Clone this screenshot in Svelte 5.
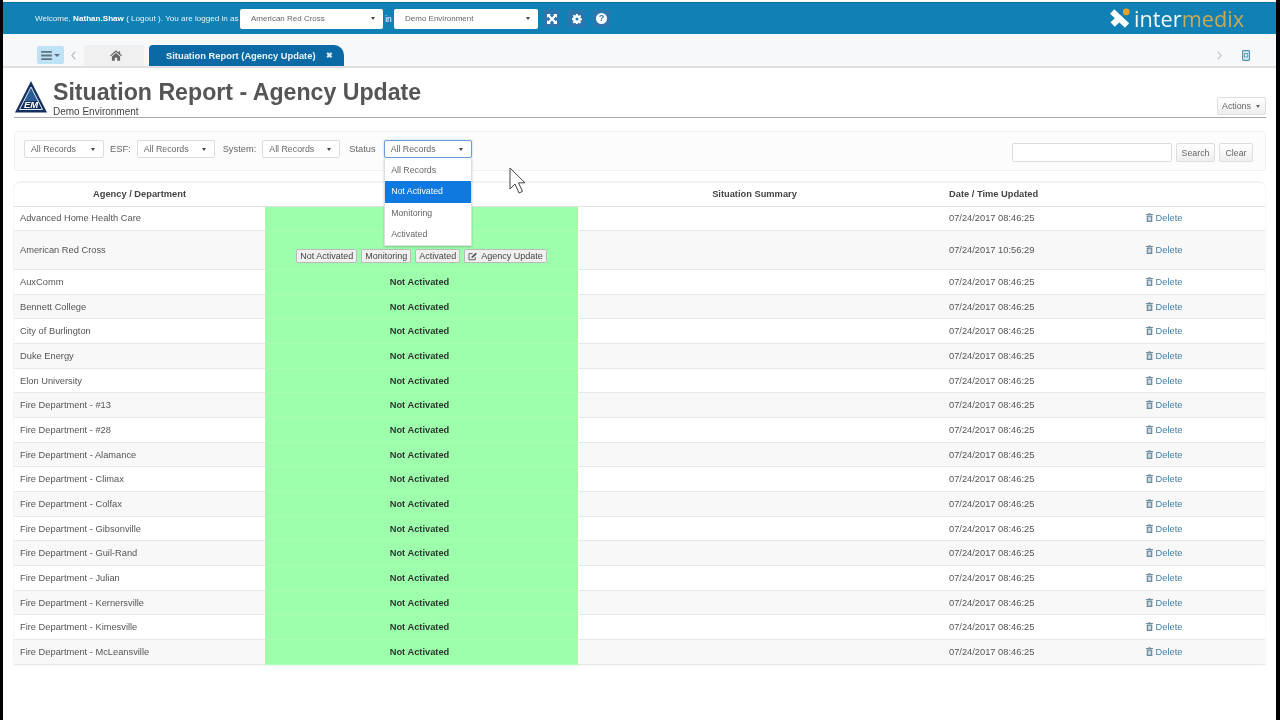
<script>
	const rows = [
		'Advanced Home Health Care',
		'American Red Cross',
		'AuxComm',
		'Bennett College',
		'City of Burlington',
		'Duke Energy',
		'Elon University',
		'Fire Department - #13',
		'Fire Department - #28',
		'Fire Department - Alamance',
		'Fire Department - Climax',
		'Fire Department - Colfax',
		'Fire Department - Gibsonville',
		'Fire Department - Guil-Rand',
		'Fire Department - Julian',
		'Fire Department - Kernersville',
		'Fire Department - Kimesville',
		'Fire Department - McLeansville'
	];
	const options = ['All Records', 'Not Activated', 'Monitoring', 'Activated'];
</script>

<div class="page">
	<header class="topbar">
		<div class="welcome">Welcome, <b>Nathan.Shaw</b> ( Logout ). You are logged in as</div>
		<div class="select top-select org">American Red Cross<i class="caret"></i></div>
		<span class="in">in</span>
		<div class="select top-select env">Demo Environment<i class="caret"></i></div>
		<button class="icon-btn first" aria-label="Fullscreen">
			<svg viewBox="0 0 12 12" width="10" height="10"><path fill="#fff" d="M0 0h4.5L3.4 1.6 6 4.1l2.6-2.5L7.5 0H12v4.5l-1.6-1.1L7.9 6l2.5 2.6 1.6-1.1V12H7.5l1.1-1.6L6 7.9l-2.6 2.5L4.5 12H0V7.5l1.6 1.1L4.1 6 1.6 3.4 0 4.5z" /></svg>
		</button>
		<button class="icon-btn" aria-label="Settings">
			<svg viewBox="0 0 12 12" width="10" height="10"><path fill="#fff" fill-rule="evenodd" d="M4.9 0h2.2l.3 1.6 1.1.5L9.9 1.2l1.1 1.5-1 1.2.3 1.2 1.7.3v2.1l-1.7.3-.4 1.1 1 1.3-1.4 1.3-1.3-.9-1.1.4-.3 1.6H4.9l-.3-1.6-1.1-.4-1.3.9L.8 9.9l.9-1.3-.4-1.1L0 7.1V5l1.4-.4.4-1.1-.9-1.3L2.2 1l1.3.9 1.1-.4zM6 4.2a1.8 1.8 0 1 0 0 3.6 1.8 1.8 0 0 0 0-3.6z" /></svg>
		</button>
		<button class="icon-btn help" aria-label="Help"><span>?</span></button>
		<div class="brand">
			<svg viewBox="0 0 24 22" width="21" height="20">
				<path fill="none" stroke="#fff" stroke-width="7" d="M2.5 3.5 19.5 19.5M3 18.5l8-7.5" />
				<circle cx="18.6" cy="4" r="3.8" fill="#e9a02d" />
			</svg>
			<span class="brand-text">inter<em>medix</em></span>
		</div>
	</header>

	<nav class="tabbar">
		<button class="menu-btn" aria-label="Menu">
			<svg viewBox="0 0 12 10" width="11" height="9"><path fill="#5f7480" d="M0 0h12v2H0zM0 4h12v2H0zM0 8h12v2H0z" /></svg>
			<i class="mini-caret"></i>
		</button>
		<svg class="chev left" viewBox="0 0 6 10" width="5" height="9"><path fill="none" stroke="#bbb" stroke-width="1.4" d="M5 .5 1 5l4 4.5" /></svg>
		<div class="home-tab">
			<svg viewBox="0 0 14 12" width="12" height="11"><path fill="#666" d="M7 0 0 6l.8 1L7 1.8 13.2 7l.8-1-2.2-1.9V1h-1.7v1.7zM2.2 7.2V12h3.4V8.6h2.8V12h3.4V7.2L7 3.2z" /></svg>
		</div>
		<div class="active-tab">Situation Report (Agency Update)<span class="close">✖</span></div>
		<svg class="chev right" viewBox="0 0 6 10" width="5" height="9"><path fill="none" stroke="#c8c8c8" stroke-width="1.4" d="M1 .5 5 5 1 9.5" /></svg>
		<svg class="doc" viewBox="0 0 8 11" width="8" height="11"><rect x=".6" y=".6" width="6.8" height="9.8" rx=".8" fill="#d9edf7" stroke="#4a8fae" stroke-width="1.1" /><rect x="2.3" y="3.6" width="3.4" height="3.4" fill="none" stroke="#4a8fae" stroke-width=".8" /></svg>
	</nav>

	<section class="content">
		<div class="title-row">
			<svg class="logo" viewBox="0 0 32 32" width="32" height="32">
				<path fill="#14305f" d="M16 0 32 31.5H0z" />
				<path fill="#2a5c96" d="M16 7 24 20H8z" />
				<path fill="none" stroke="#dfe8f2" stroke-width="1" d="M16 6 27.5 28.5H4.5z" />
				<text x="16" y="27" text-anchor="middle" class="logo-text">EM</text>
			</svg>
			<div class="title-text">
				<h1>Situation Report - Agency Update</h1>
				<div class="subtitle">Demo Environment</div>
			</div>
			<button class="actions">Actions<i class="caret small"></i></button>
		</div>

		<div class="filters">
			<div class="select f1">All Records<i class="caret"></i></div>
			<label class="l-esf">ESF:</label>
			<div class="select f2">All Records<i class="caret"></i></div>
			<label class="l-sys">System:</label>
			<div class="select f2">All Records<i class="caret"></i></div>
			<label class="l-status">Status</label>
			<div class="select status-select">
				All Records<i class="caret"></i>
				<ul class="dropdown">
					{#each options as opt, i}
						<li class:selected={i === 1}>{opt}</li>
					{/each}
				</ul>
			</div>
			<input class="search" type="text" />
			<button class="btn search-btn">Search</button>
			<button class="btn clear-btn">Clear</button>
		</div>

		<table>
			<colgroup>
				<col style="width:251px" />
				<col style="width:313px" />
				<col style="width:353px" />
				<col style="width:197px" />
				<col />
			</colgroup>
			<thead>
				<tr>
					<th>Agency / Department</th>
					<th></th>
					<th>Situation Summary</th>
					<th class="date-h">Date / Time Updated</th>
					<th></th>
				</tr>
			</thead>
			<tbody>
				{#each rows as name, i}
					<tr class:tall={i === 1}>
						<td class="name">{name}</td>
						<td class="status">
							<div class="status-label">Not Activated</div>
							{#if i === 1}
								<div class="status-btns">
									<button>Not Activated</button>
									<button>Monitoring</button>
									<button>Activated</button>
									<button>
										<svg viewBox="0 0 11 10" width="10" height="9"><path fill="none" stroke="#555" stroke-width="1" d="M8 5.6v3H1V1.8h4" /><path fill="#555" d="M4 5 8.4.8l1.4 1.4L5.4 6.4 3.8 6.6z" /></svg>
										Agency Update
									</button>
								</div>
							{/if}
						</td>
						<td></td>
						<td class="date">{i === 1 ? '07/24/2017 10:56:29' : '07/24/2017 08:46:25'}</td>
						<td class="del">
							<svg viewBox="0 0 8 10" width="7" height="9"><path fill="#6c8ba0" fill-rule="evenodd" d="M3 0h2l.4 1H8v1H0V1h2.6zM.8 2.6h6.4V10H.8zM2.2 4v4.6h.8V4zm1.4 0v4.6h.8V4zm1.4 0v4.6h.8V4z" /></svg>
							<span>Delete</span>
						</td>
					</tr>
				{/each}
			</tbody>
		</table>
	</section>

	<svg class="cursor" viewBox="0 0 18 27" width="18" height="27">
		<path fill="#fff" stroke="#444" stroke-width="1" d="M1 1v21l5-5 4 9 3.5-1.6-4-8.6H16z" />
	</svg>
</div>

<style>
	:global(body) {
		margin: 0;
		background: #000;
	}

	.page {
		position: relative;
		height: 720px;
		margin: 0 4px 0 3px;
		background: #fff;
		font-family: 'Liberation Sans', Arial, sans-serif;
		font-size: 9.3px;
		color: #444;
		overflow: hidden;
		filter: blur(0.45px);
	}

	.topbar {
		display: flex;
		align-items: center;
		height: 32px;
		margin-top: 2px;
		padding-left: 32px;
		background: #1180b4;
		color: #fff;
		border-top: 1px solid #0f6f9e;
		box-sizing: border-box;
	}

	.welcome {
		width: 205px;
		font-size: 8.1px;
		color: #e4f3fa;
		white-space: nowrap;
	}

	.welcome b {
		color: #fff;
	}

	.select {
		position: relative;
		display: flex;
		align-items: center;
		box-sizing: border-box;
		height: 18px;
		padding-left: 6px;
		background: #fff;
		border: 1px solid #ddd;
		border-radius: 2px;
		font-size: 8.8px;
		color: #666;
	}

	.caret {
		position: absolute;
		right: 8px;
		top: 50%;
		margin-top: -1.5px;
		border-left: 2.5px solid transparent;
		border-right: 2.5px solid transparent;
		border-top: 3.5px solid #444;
	}

	.top-select {
		height: 20px;
		border: none;
		padding-left: 11px;
		font-size: 8px;
	}

	.org {
		width: 143px;
	}

	.env {
		width: 144px;
	}

	.in {
		width: 11px;
		text-align: center;
		font-size: 8.5px;
	}

	.icon-btn {
		display: flex;
		align-items: center;
		justify-content: center;
		width: 17px;
		height: 17px;
		margin-left: 8px;
		padding: 0;
		border: none;
		background: #2c76ad;
	}

	.icon-btn.first {
		margin-left: 5px;
	}

	.help span {
		display: block;
		width: 11px;
		height: 11px;
		border-radius: 50%;
		background: #fff;
		color: #2c76ad;
		font-size: 9px;
		font-weight: 700;
		line-height: 11px;
	}

	.brand {
		display: flex;
		align-items: center;
		margin-left: auto;
		margin-right: 32px;
		gap: 3px;
	}

	.brand-text {
		font-family: 'Open Sans', sans-serif;
		font-size: 21.7px;
		line-height: 1;
		color: #f2f8fb;
	}

	.brand-text em {
		font-style: normal;
		color: #c7aa55;
	}

	.tabbar {
		display: flex;
		align-items: flex-end;
		height: 34px;
		padding-left: 34px;
		box-sizing: border-box;
		background: #f7f8fa;
		border-bottom: 2px solid #e0e0e0;
	}

	.menu-btn {
		display: flex;
		align-items: center;
		justify-content: center;
		gap: 2px;
		align-self: flex-start;
		width: 27px;
		height: 18px;
		margin-top: 12px;
		padding: 0;
		border: none;
		border-radius: 2px;
		background: #bfe3f6;
	}

	.mini-caret {
		border-left: 3px solid transparent;
		border-right: 3px solid transparent;
		border-top: 3px solid #5f7480;
	}

	.chev {
		align-self: flex-start;
	}

	.chev.left {
		margin: 17px 8px 0 7px;
	}

	.home-tab {
		display: flex;
		align-items: center;
		justify-content: center;
		box-sizing: border-box;
		width: 60px;
		height: 21px;
		margin-right: 5px;
		padding-left: 3px;
		background: #f0f0f0;
		border-radius: 3px 3px 0 0;
	}

	.active-tab {
		display: flex;
		align-items: center;
		box-sizing: border-box;
		width: 195px;
		height: 21px;
		padding-left: 17px;
		background: #0b6aa6;
		border-radius: 4px 10px 0 0;
		color: #eaf4fa;
		font-size: 9.35px;
		font-weight: 700;
		white-space: nowrap;
	}

	.close {
		margin-left: 10px;
		font-size: 8px;
		color: #dcecf5;
	}

	.chev.right {
		margin: 17px 0 0 auto;
	}

	.doc {
		align-self: flex-start;
		margin: 16px 26px 0 20px;
	}

	.content {
		padding: 0 10px 0 11px;
	}

	.title-row {
		position: relative;
		display: flex;
		align-items: flex-start;
		height: 50px;
		box-sizing: border-box;
		border-bottom: 1px solid #aaa;
	}

	.logo {
		margin: 13px 6px 0 1px;
	}

	.logo-text {
		font: italic 700 9.5px 'Liberation Sans', sans-serif;
		fill: #fff;
	}

	h1 {
		margin: 10px 0 0;
		font-size: 23.15px;
		line-height: 28px;
		font-weight: 700;
		color: #555;
		white-space: nowrap;
	}

	.subtitle {
		margin-top: 0;
		font-size: 10px;
		line-height: 11px;
		color: #444;
	}

	.actions {
		position: relative;
		margin: 29px 0 0 auto;
		width: 49px;
		height: 18px;
		padding: 0 10px 0 0;
		border: 1px solid #ddd;
		border-radius: 2px;
		background: linear-gradient(#fff, #eee);
		font: 8.8px 'Liberation Sans', sans-serif;
		color: #666;
	}

	.caret.small {
		right: 5px;
		border-top-color: #666;
	}

	.filters {
		display: flex;
		align-items: flex-start;
		height: 40px;
		box-sizing: border-box;
		margin-top: 13px;
		padding: 8px 0 0 9px;
		border: 1px solid #f0f0f0;
		border-radius: 4px;
		background: #fcfcfc;
	}

	.filters label {
		line-height: 18px;
		font-size: 9.3px;
		color: #666;
	}

	.f1 {
		width: 80px;
	}

	.f2 {
		width: 78px;
	}

	.l-esf {
		margin: 0 6px 0 6px;
	}

	.l-sys {
		margin: 0 6px 0 8px;
	}

	.l-status {
		margin: 0 8px 0 9px;
	}

	.status-select {
		width: 88px;
		border-color: #6d9ed8;
		box-shadow: 0 0 2px rgba(80, 140, 210, 0.5);
	}

	.dropdown {
		position: absolute;
		z-index: 2;
		left: -1px;
		top: 17px;
		width: 88px;
		margin: 0;
		padding: 2px 0 0;
		list-style: none;
		background: #fff;
		border: 1px solid #ddd;
		border-top: none;
		box-sizing: border-box;
		box-shadow: 0 1px 2px rgba(0, 0, 0, 0.2);
	}

	.dropdown li {
		height: 21.3px;
		line-height: 21.3px;
		padding-left: 6.5px;
		color: #666;
	}

	.dropdown li.selected {
		background: #0f79e0;
		color: #fff;
	}

	.search {
		width: 160px;
		height: 19px;
		box-sizing: border-box;
		margin: 3px 0 0 auto;
		border: 1px solid #ddd;
		border-radius: 2px;
		background: #fff;
	}

	.btn {
		height: 19px;
		margin-top: 3px;
		padding: 0;
		border: 1px solid #ddd;
		border-radius: 2px;
		background: linear-gradient(#fff, #eee);
		font: 8.8px 'Liberation Sans', sans-serif;
		color: #666;
	}

	.search-btn {
		width: 39px;
		margin-left: 4px;
	}

	.clear-btn {
		width: 34px;
		margin: 3px 12px 0 4px;
	}

	table {
		width: 1251px;
		margin-top: 11px;
		border-collapse: separate;
		border-spacing: 0;
		table-layout: fixed;
		border-top: 1px solid #eee;
		border-radius: 6px 6px 0 0;
		box-shadow: 0 0 2px rgba(0, 0, 0, 0.12);
	}

	th {
		height: 23.5px;
		padding: 0;
		font-size: 9.3px;
		font-weight: 700;
		color: #444;
		border-bottom: 1px solid #e2e2e2;
		box-sizing: border-box;
	}

	th.date-h {
		text-align: left;
		padding-left: 18px;
	}

	td {
		height: 24.66px;
		padding: 0;
		box-sizing: border-box;
		border-bottom: 1px solid #e8e8e8;
		font-size: 9.3px;
		color: #555;
	}

	tbody tr:nth-child(even) td {
		background: #f8f8f8;
	}

	tr.tall td {
		height: 39px;
	}

	tr.tall td.name {
		padding-bottom: 1px;
	}

	.name {
		padding-left: 6px;
	}

	tbody tr td.status {
		background: #9dffab;
		border-bottom: 1px solid #a9ffb5;
		text-align: center;
		font-weight: 700;
		color: #333;
	}

	.status-label {
		padding-right: 4px;
	}

	.status-btns {
		display: flex;
		justify-content: center;
		gap: 4px;
		margin-top: 2px;
	}

	.status-btns button {
		display: flex;
		align-items: center;
		gap: 3px;
		height: 14px;
		padding: 0 3px;
		border: 1px solid #bbb;
		border-radius: 2px;
		background: #f0f0f0;
		font: 9px 'Liberation Sans', sans-serif;
		color: #444;
		white-space: nowrap;
	}

	.date {
		padding-left: 18px;
	}

	.del {
		padding-left: 18px;
		color: #3f7fa8;
	}

	.del svg {
		vertical-align: -1px;
	}

	.cursor {
		position: absolute;
		left: 506px;
		top: 167px;
	}
</style>
